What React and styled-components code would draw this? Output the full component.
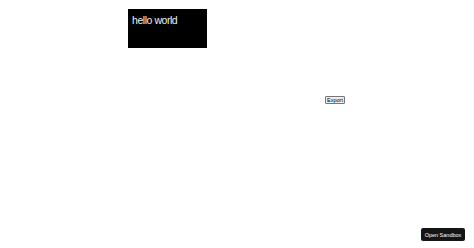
import React from "react";
import styled, { createGlobalStyle } from "styled-components";

const GlobalStyle = createGlobalStyle`
  html, body {
    margin: 0;
    padding: 0;
    background: #ffffff;
    font-family: "Liberation Sans", Arial, sans-serif;
  }
`;

const Page = styled.div`
  width: 474px;
  height: 248px;
  display: flex;
  flex-direction: column;
  padding: 9px 0 0 128px;
  box-sizing: border-box;
`;

const Canvas = styled.div`
  width: 79px;
  height: 39px;
  background: #000000;
  color: #f2f2f2;
  font-size: 10.5px;
  letter-spacing: -0.45px;
  padding: 5px 0 0 4px;
  box-sizing: border-box;
  line-height: 13px;
`;

const Toolbar = styled.div`
  display: flex;
  padding: 48px 0 0 197px;
`;

const ExportButton = styled.button`
  font-family: "Liberation Sans", Arial, sans-serif;
  font-size: 5.5px;
  height: 8px;
  width: 20px;
  padding: 0;
  line-height: 6px;
  border: 1px solid #767676;
  border-radius: 1px;
  background: #efefef;
  color: #000;
`;

const SandboxButton = styled.button`
  position: fixed;
  right: 9px;
  bottom: 7px;
  width: 44px;
  height: 13px;
  padding: 0;
  border: none;
  border-radius: 2px;
  background: #151515;
  color: #ffffff;
  font-family: "Liberation Sans", Arial, sans-serif;
  font-size: 5.5px;
`;

export default function App() {
  return (
    <>
      <GlobalStyle />
      <Page>
        <Canvas>hello world</Canvas>
        <Toolbar>
          <ExportButton>Export</ExportButton>
        </Toolbar>
      </Page>
      <SandboxButton>Open Sandbox</SandboxButton>
    </>
  );
}
